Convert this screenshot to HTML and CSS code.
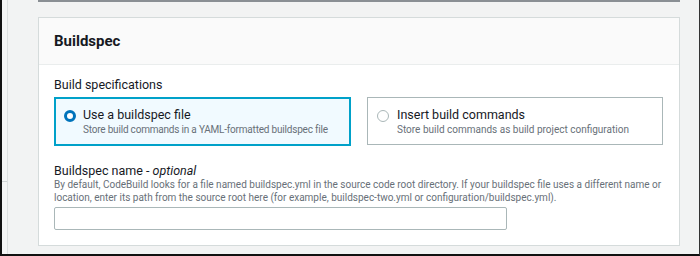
FILE: index.html
```html
<!DOCTYPE html>
<html>
<head>
<meta charset="utf-8">
<link rel="stylesheet" href="styles.css">
</head>
<body>
<div class="frame">
  <div class="rail"><div class="rail-top"></div><div class="rail-bottom"></div></div>
  <div class="main">
    <div class="prev-edge"></div>
    <section class="panel">
      <header class="panel-header"><h2>Buildspec</h2></header>
      <div class="panel-body">
        <div class="field-label">Build specifications</div>
        <div class="tiles">
          <div class="tile selected">
            <span class="radio on"></span>
            <div class="tile-text">
              <div class="tile-title">Use a buildspec file</div>
              <div class="tile-desc">Store build commands in a YAML-formatted buildspec file</div>
            </div>
          </div>
          <div class="tile">
            <span class="radio"></span>
            <div class="tile-text">
              <div class="tile-title">Insert build commands</div>
              <div class="tile-desc">Store build commands as build project configuration</div>
            </div>
          </div>
        </div>
        <div class="field">
          <div class="field-label">Buildspec name - <i>optional</i></div>
          <div class="field-desc">By default, CodeBuild looks for a file named buildspec.yml in the source code root directory. If your buildspec file uses a different name or location, enter its path from the source root here (for example, buildspec-two.yml or configuration/buildspec.yml).</div>
          <input class="text-input" type="text">
        </div>
      </div>
    </section>
  </div>
</div>
</body>
</html>
```

FILE: styles.css
```css
* { box-sizing: border-box; }
html, body { margin: 0; padding: 0; }
body {
  width: 700px;
  height: 256px;
  background: #f2f3f3;
  font-family: Roboto, "Liberation Sans", sans-serif;
  color: #16191f;
  overflow: hidden;
}
.frame {
  display: flex;
  height: 256px;
  border-left: 2px solid #111;
  border-bottom: 2px solid #111;
  border-right: 1px solid #333;
}
.rail {
  width: 6px;
  display: flex;
  flex-direction: column;
  border-right: 1px solid #dde1e1;
  background: #f4f5f5;
}
.rail-top { height: 182px; border-bottom: 1px solid #d0d5d5; }
.rail-bottom { flex: 1; }
.main {
  flex: 1;
  padding-left: 30px;
  padding-right: 19px;
}
.prev-edge {
  height: 2px;
  background: #8a8f94;
  margin-bottom: 15px;
}
.panel {
  background: #fff;
  border: 1px solid #d5dbdb;
  height: 229px;
}
.panel-header {
  background: #fafafa;
  border-bottom: 1px solid #eaeded;
  height: 47px;
  padding: 0 15px;
  display: flex;
  align-items: center;
}
.panel-header h2 {
  margin: 0;
  font-size: 15px;
  font-weight: 700;
  line-height: 18px;
}
.panel-body {
  padding: 12px 16px 0 15px;
}
.field-label {
  font-size: 12.5px;
  line-height: 16px;
}
.field-label i { font-style: italic; }
.tiles {
  display: grid;
  grid-template-columns: 297px 296px;
  gap: 16px;
  margin-top: 4px;
}
.tile {
  display: flex;
  align-items: flex-start;
  gap: 8px;
  border: 1px solid #aab7b8;
  height: 48px;
  padding: 9px 6px 0 9px;
}
.tile.selected {
  border: 2px solid #00a1c9;
  background: #f1faff;
  height: 49px;
  padding: 8px 5px 0 8px;
}
.tile.selected .radio { margin-right: -1px; }
.radio {
  width: 12px;
  height: 12px;
  border-radius: 50%;
  border: 1px solid #aab7b8;
  margin-top: 3px;
  flex: none;
  background: #fff;
}
.radio.on {
  border: 3.5px solid #0073bb;
}
.tile-title {
  font-size: 12.5px;
  line-height: 16px;
}
.tile-desc {
  font-size: 10px;
  line-height: 13px;
  color: #687078;
  white-space: nowrap;
}
.tile.selected .tile-desc {
  letter-spacing: -0.2px;
}
.field { margin-top: 18px; }
.field .field-label { line-height: 14px; }
.field-desc {
  font-size: 10px;
  line-height: 13px;
  color: #687078;
}
.text-input {
  display: block;
  width: 453px;
  height: 23px;
  margin-top: 3px;
  border: 1px solid #aab7b8;
  border-radius: 2px;
  background: #fff;
  font: inherit;
}
```
